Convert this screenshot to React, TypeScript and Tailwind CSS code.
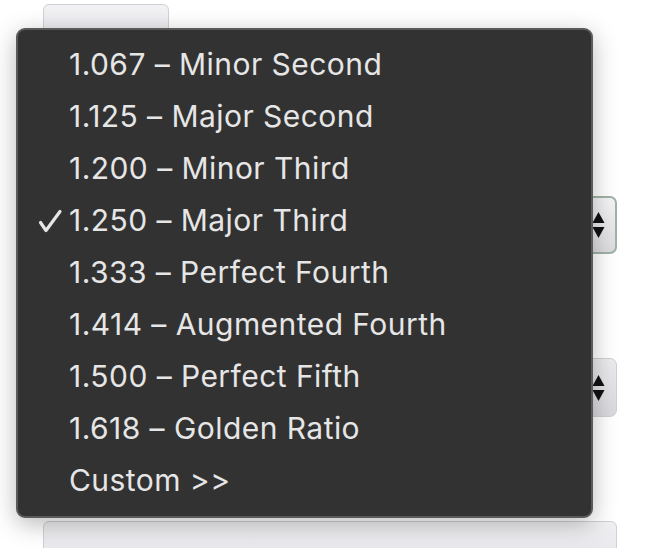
import React from 'react';

const options = [
  '1.067 – Minor Second',
  '1.125 – Major Second',
  '1.200 – Minor Third',
  '1.250 – Major Third',
  '1.333 – Perfect Fourth',
  '1.414 – Augmented Fourth',
  '1.500 – Perfect Fifth',
  '1.618 – Golden Ratio',
  'Custom >>',
];

const selected = '1.250 – Major Third';

function Arrows() {
  return (
    <svg width="13" height="28" viewBox="0 0 13 28" className="shrink-0">
      <path d="M6.5 1 L12.5 12 L0.5 12 Z" fill="#111" />
      <path d="M6.5 27 L12.5 16 L0.5 16 Z" fill="#111" />
    </svg>
  );
}

function Check() {
  return (
    <svg width="26" height="26" viewBox="0 0 26 26">
      <path
        d="M3.5 14.5 L9 22.5 L23 3.5"
        fill="none"
        stroke="#e6e6e6"
        strokeWidth="3.2"
        strokeLinecap="round"
        strokeLinejoin="round"
      />
    </svg>
  );
}

function SelectBox({ focused }: { focused?: boolean }) {
  return (
    <div
      className={
        focused
          ? 'flex h-[58px] w-[574px] items-center justify-end rounded-[7px] border-2 border-[#9db3a5] bg-gradient-to-b from-[#f4f4f6] to-[#dcdce0] pr-[10px]'
          : 'flex h-[59px] w-[574px] items-center justify-end rounded-[7px] border border-[#cfcfd3] bg-gradient-to-b from-[#ececef] to-[#d8d8dc] pr-[11px]'
      }
    >
      <Arrows />
    </div>
  );
}

export default function App() {
  return (
    <div
      className="relative h-[548px] w-[650px] overflow-hidden bg-white"
      style={{ fontFamily: 'Inter, "Noto Sans", sans-serif' }}
    >
      {/* form behind the open menu */}
      <div className="flex flex-col pl-[43px] pt-[4px]">
        <div className="h-[60px] w-[126px] rounded-[6px] border border-[#d0d0d5] bg-gradient-to-b from-[#f2f2f5] to-[#e4e4e9]" />
        <div className="mt-[132px]">
          <SelectBox focused />
        </div>
        <div className="mt-[104px]">
          <SelectBox />
        </div>
        <div className="mt-[104px] h-[40px] w-[574px] rounded-[6px] border border-[#d0d0d5] bg-gradient-to-b from-[#f0f0f3] to-[#e6e6ea]" />
      </div>

      {/* open dropdown menu */}
      <div className="absolute left-[16px] top-[28px] w-[577px] rounded-[9px] border-2 border-[#5a5a5a] bg-[#323232] pt-[8px] pb-[10px] shadow-[0_6px_24px_rgba(0,0,0,0.28)]">
        {options.map((o) => (
          <div key={o} className="flex h-[52px] items-center">
            <span className="flex w-[51px] shrink-0 justify-end pr-[6px] pt-[1px]">
              {o === selected ? <Check /> : null}
            </span>
            <span className="text-[30px] leading-none tracking-[0.45px] text-[#e6e6e6]">{o}</span>
          </div>
        ))}
      </div>
    </div>
  );
}
